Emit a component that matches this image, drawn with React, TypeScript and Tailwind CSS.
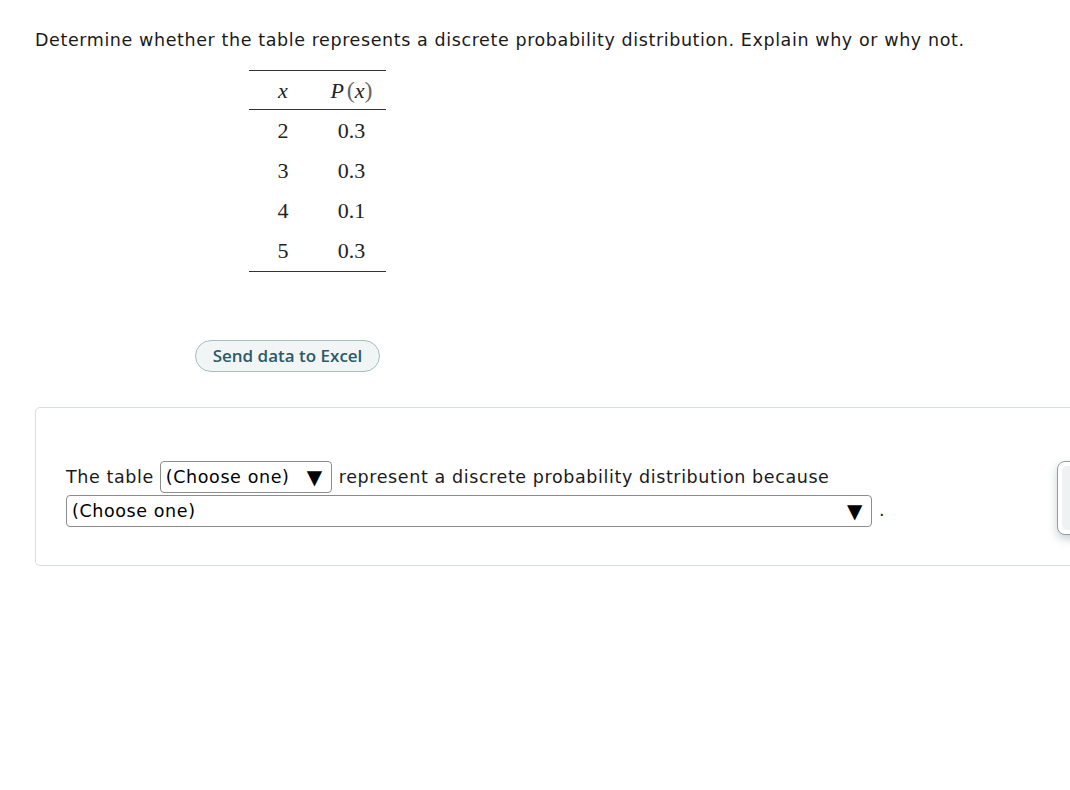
const rows = [
  { x: '2', p: '0.3' },
  { x: '3', p: '0.3' },
  { x: '4', p: '0.1' },
  { x: '5', p: '0.3' },
];

function Choose({ className }: { className?: string }) {
  return (
    <span
      className={
        'inline-flex items-center justify-between h-[32px] border border-[#8c8c8c] rounded-[4px] bg-white pl-[5px] pr-[8px] text-black ' +
        (className ?? '')
      }
    >
      <span>(Choose one)</span>
      <span className="text-[20px] leading-none">▼</span>
    </span>
  );
}

export default function App() {
  return (
    <div className="min-h-[790px] w-[1070px] overflow-hidden bg-white font-['DejaVu_Sans',Verdana,sans-serif] text-[17.5px] tracking-[0.6px] text-[#1a1a1a]">
      <p className="pl-[35px] pt-[29px] leading-[22px]">
        Determine whether the table represents a discrete probability distribution. Explain why or why not.
      </p>

      {/* Data table */}
      <div className="ml-[249px] mt-[19px] w-[137px] font-['Liberation_Serif',serif] text-[22px] tracking-normal text-[#222]">
        <div className="border-t border-b border-[#333] h-[40px] flex items-center">
          <span className="w-[68px] text-center italic">x</span>
          <span className="flex-1 text-center">
            <span className="italic">P</span>
            <span className="text-[#666] text-[24px] ml-[3px]">(</span>
            <span className="italic">x</span>
            <span className="text-[#666] text-[24px]">)</span>
          </span>
        </div>
        <div className="border-b border-[#333] pb-[1px]">
          {rows.map((r) => (
            <div key={r.x} className="flex items-center h-[40px]">
              <span className="w-[68px] text-center">{r.x}</span>
              <span className="flex-1 text-center">{r.p}</span>
            </div>
          ))}
        </div>
      </div>

      <button className="ml-[195px] mt-[68px] h-[32px] w-[185px] rounded-full border border-[#a9bcc0] bg-[#f1f5f6] font-['Open_Sans',sans-serif] text-[17px] tracking-normal font-semibold text-[#2d5a66]">
        Send data to Excel
      </button>

      {/* Answer box */}
      <div className="ml-[35px] mt-[35px] w-[1100px] h-[159px] rounded-[5px] border border-[#d9dfe1] pt-[53px] pl-[30px] relative">
        <div className="flex items-center gap-[6px] h-[32px]">
          <span>The table</span>
          <Choose className="w-[172px]" />
          <span className="ml-[1px]">represent a discrete probability distribution because</span>
        </div>
        <div className="flex items-end gap-[7px] mt-[2px]">
          <Choose className="w-[806px]" />
          <span className="pb-[4px]">.</span>
        </div>
        <div className="absolute left-[1021px] top-[53px] h-[74px] w-[40px] rounded-[8px] border border-[#8aa0a6] bg-white shadow-[0_4px_10px_rgba(100,120,130,0.35)] p-[4px]">
          <div className="h-full w-full rounded-[5px] bg-[#eef2f3]" />
        </div>
      </div>
    </div>
  );
}
